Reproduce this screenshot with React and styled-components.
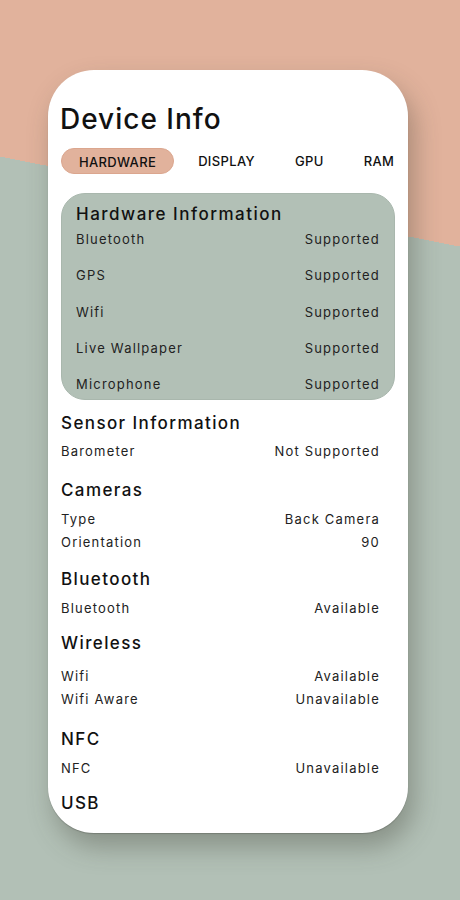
import React from 'react';
import styled, { createGlobalStyle } from 'styled-components';

const GlobalStyle = createGlobalStyle`
	html, body {
		margin: 0;
		padding: 0;
	}
	body {
		font-family: "Inter", "Liberation Sans", sans-serif;
		color: #111;
	}
`

const hardware = [
	['Bluetooth', 'Supported'],
	['GPS', 'Supported'],
	['Wifi', 'Supported'],
	['Live Wallpaper', 'Supported'],
	['Microphone', 'Supported'],
];

// lead = space above the heading, space = space between heading and rows
const sections = [
	{ title: 'Sensor Information', lead: 11, space: 4.5, rows: [['Barometer', 'Not Supported']] },
	{ title: 'Cameras', lead: 15.5, space: 5.5, rows: [['Type', 'Back Camera'], ['Orientation', '90']] },
	{ title: 'Bluetooth', lead: 13.5, space: 5.5, rows: [['Bluetooth', 'Available']] },
	{ title: 'Wireless', lead: 11.5, space: 9.5, rows: [['Wifi', 'Available'], ['Wifi Aware', 'Unavailable']] },
	{ title: 'NFC', lead: 16.5, space: 5.5, rows: [['NFC', 'Unavailable']] },
	{ title: 'USB', lead: 11.5, space: 5.5, rows: [] },
];

const tabs = ['Hardware', 'Display', 'GPU', 'RAM'];

const App = () => {
	return (
		<>
		<GlobalStyle />
		<Page>
			<Phone>
				<Title>Device Info</Title>
				<Tabs>
					{tabs.map((t, i) => (
						<Tab key={t} active={i === 0}>{t}</Tab>
					))}
				</Tabs>
				<HardwareCard>
					<CardTitle>Hardware Information</CardTitle>
					{hardware.map(([k, v]) => (
						<CardRow key={k}>
							<span>{k}</span>
							<span>{v}</span>
						</CardRow>
					))}
				</HardwareCard>
				{sections.map(s => (
					<Section key={s.title} lead={s.lead}>
						<SectionTitle space={s.space}>{s.title}</SectionTitle>
						{s.rows.map(([k, v]) => (
							<Row key={k}>
								<span>{k}</span>
								<span>{v}</span>
							</Row>
						))}
					</Section>
				))}
			</Phone>
		</Page>
		</>
	);
}

export default App;

// styles
const Page = styled.div`
	height: 900px;
	width: 460px;
	overflow: hidden;
	background: linear-gradient(191.07deg, #e1b29c 242px, #b2c0b6 242px);
	padding-top: 70px;
	box-sizing: border-box;
`
const Phone = styled.div`
	margin-left: 48px;
	width: 360px;
	height: 763px;
	box-sizing: border-box;
	background: #fff;
	border-radius: 46px;
	overflow: hidden;
	padding: 30px 13px 0 13px;
	box-shadow: 6px 14px 26px rgba(60, 60, 50, 0.35), 0 1px 1px rgba(0,0,0,.2);
`
const Title = styled.h1`
	margin: 0 0 0 -1px;
	font-size: 28px;
	font-weight: 500;
	letter-spacing: 1px;
	line-height: 38px;
`
const Tabs = styled.div`
	display: flex;
	align-items: center;
	margin-top: 10px;
	height: 26px;
`
const Tab = styled.div`
	height: 26px;
	line-height: 26px;
	box-sizing: border-box;
	font-size: 13px;
	font-weight: 500;
	letter-spacing: 0.35px;
	text-transform: uppercase;
	border-radius: 13px;
	padding: ${p => p.active ? '0 17px' : '0'};
	margin-right: ${p => p.active ? '24px' : '40px'};
	background: ${p => p.active ? '#e1b29c' : 'transparent'};
	border: ${p => p.active ? '1px solid #dba68e' : 'none'};
	white-space: nowrap;
`
const HardwareCard = styled.div`
	margin-top: 19px;
	background: #b2c0b6;
	border: 1px solid #a9b7ad;
	border-radius: 24px;
	padding: 8px 14px 6px 14px;
	box-sizing: border-box;
	height: 207px;
`
const CardTitle = styled.div`
	font-size: 17px;
	font-weight: 500;
	letter-spacing: 1.5px;
	line-height: 24px;
`
const CardRow = styled.div`
	display: flex;
	justify-content: space-between;
	font-size: 13px;
	letter-spacing: 1.2px;
	line-height: 18px;
	margin-top: 18.25px;
	color: #222;
	&:nth-child(2) { margin-top: 4px; }
`
const Section = styled.div`
	margin-top: ${p => p.lead}px;
	padding-right: 15px;
`
const SectionTitle = styled.div`
	font-size: 17px;
	font-weight: 500;
	letter-spacing: 1.4px;
	line-height: 24px;
	margin-bottom: ${p => p.space}px;
`
const Row = styled.div`
	display: flex;
	justify-content: space-between;
	font-size: 13px;
	letter-spacing: 1.2px;
	line-height: 23px;
	color: #222;
`
